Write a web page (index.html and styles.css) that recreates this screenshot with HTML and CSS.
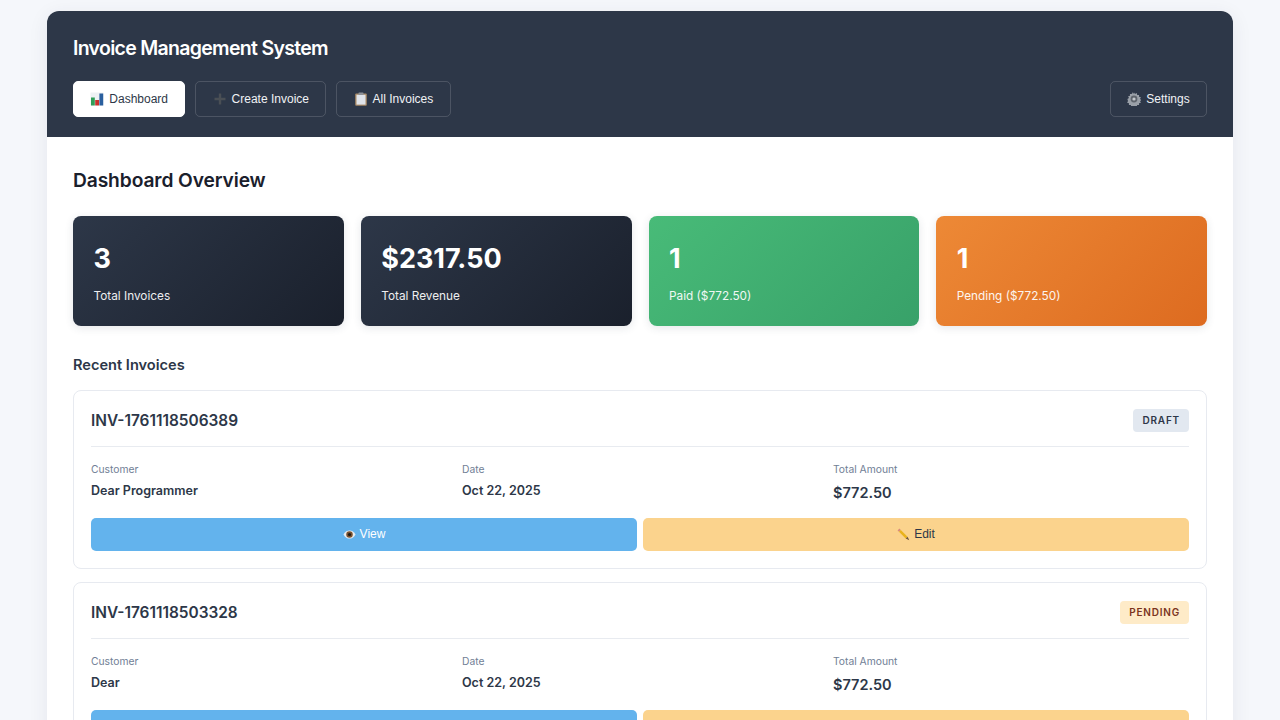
FILE: index.html
```html
<!DOCTYPE html>
<html lang="en">
<head>
<meta charset="utf-8">
<title>Invoice Management System</title>
<link rel="stylesheet" href="styles.css">
</head>
<body>
<div class="app">
  <header class="header">
    <h1 class="title">Invoice Management System</h1>
    <nav class="nav">
      <div class="nav-left">
        <button class="nav-btn active"><svg class="ico" viewBox="0 0 14 14"><rect x="0.5" y="0.5" width="13" height="13" fill="#eef1f4"/><rect x="1" y="5.500" width="3.800" height="8" fill="#2f9e58"/><rect x="5.200" y="8" width="3.800" height="5.500" fill="#c9302c"/><rect x="9.400" y="1.500" width="3.800" height="12" fill="#2a5f9e"/></svg>Dashboard</button>
        <button class="nav-btn"><svg class="ico" viewBox="0 0 14 14"><path d="M5.800 1.500h2.400v4.300h4.300v2.400H8.200v4.300H5.800V8.200H1.500V5.800h4.300z" fill="#4a4f55"/></svg>Create Invoice</button>
        <button class="nav-btn"><svg class="ico" viewBox="0 0 14 14"><rect x="1.200" y="1.500" width="11.600" height="12.300" rx="1" fill="#a98a66"/><rect x="2.500" y="2.800" width="9" height="9.800" fill="#dfe3ea"/><rect x="4.500" y="0.400" width="5" height="2.600" rx="0.600" fill="#8d9096"/></svg>All Invoices</button>
      </div>
      <button class="nav-btn"><svg class="ico" viewBox="0 0 14 14"><path d="M7 .4l1 1.600 1.700-.9.500 1.900 1.900-.1-.1 1.900 1.900.500-.9 1.700 1.600 1-1.600 1 .9 1.700-1.900.500.1 1.900-1.900-.1-.500 1.900-1.700-.9-1 1.600-1-1.600-1.700.9-.500-1.900-1.900.1.1-1.900-1.900-.500.9-1.700L.4 7l1.600-1-.9-1.700 1.900-.500-.1-1.900 1.900.1.500-1.900L6 2z" fill="#9aa0a8"/><circle cx="7" cy="7" r="3.400" fill="#5f656d"/><circle cx="7" cy="7" r="1.600" fill="#c3c7cc"/></svg>Settings</button>
    </nav>
  </header>
  <main class="content">
    <h2 class="page-title">Dashboard Overview</h2>
    <section class="stats">
      <div class="stat stat-dark"><div class="stat-value">3</div><div class="stat-label">Total Invoices</div></div>
      <div class="stat stat-dark"><div class="stat-value">$2317.50</div><div class="stat-label">Total Revenue</div></div>
      <div class="stat stat-green"><div class="stat-value">1</div><div class="stat-label">Paid ($772.50)</div></div>
      <div class="stat stat-orange"><div class="stat-value">1</div><div class="stat-label">Pending ($772.50)</div></div>
    </section>
    <h3 class="section-title">Recent Invoices</h3>
    <article class="invoice">
      <div class="invoice-head"><div class="invoice-id">INV-1761118506389</div><span class="badge badge-draft">DRAFT</span></div>
      <div class="details">
        <div><div class="label">Customer</div><div class="value">Dear Programmer</div></div>
        <div><div class="label">Date</div><div class="value">Oct 22, 2025</div></div>
        <div><div class="label">Total Amount</div><div class="amount">$772.50</div></div>
      </div>
      <div class="actions">
        <button class="act act-view"><svg class="ico-sm" viewBox="0 0 14 14"><path d="M.5 7C2.500 3.600 4.600 2.600 7 2.600S11.500 3.600 13.500 7C11.500 10.400 9.400 11.400 7 11.400S2.500 10.400.5 7z" fill="#e8ecef"/><circle cx="7" cy="7" r="3.500" fill="#7a5230"/><circle cx="7" cy="7" r="1.700" fill="#1c1a18"/></svg>View</button>
        <button class="act act-edit"><svg class="ico-sm" viewBox="0 0 14 14"><path d="M2.600.6L.6 2.600l1.500 1.500 2-2z" fill="#d98c7c"/><path d="M4.100 2.100l-2 2 7.300 7.300 2-2z" fill="#e9b21c"/><path d="M9.400 11.400l3.800 1.800-1.800-3.800z" fill="#6b5640"/></svg>Edit</button>
      </div>
    </article>
    <article class="invoice">
      <div class="invoice-head"><div class="invoice-id">INV-1761118503328</div><span class="badge badge-pending">PENDING</span></div>
      <div class="details">
        <div><div class="label">Customer</div><div class="value">Dear</div></div>
        <div><div class="label">Date</div><div class="value">Oct 22, 2025</div></div>
        <div><div class="label">Total Amount</div><div class="amount">$772.50</div></div>
      </div>
      <div class="actions">
        <button class="act act-view"><svg class="ico-sm" viewBox="0 0 14 14"><path d="M.5 7C2.500 3.600 4.600 2.600 7 2.600S11.500 3.600 13.500 7C11.500 10.400 9.400 11.400 7 11.400S2.500 10.400.5 7z" fill="#e8ecef"/><circle cx="7" cy="7" r="3.500" fill="#7a5230"/><circle cx="7" cy="7" r="1.700" fill="#1c1a18"/></svg>View</button>
        <button class="act act-edit"><svg class="ico-sm" viewBox="0 0 14 14"><path d="M2.600.6L.6 2.600l1.500 1.500 2-2z" fill="#d98c7c"/><path d="M4.100 2.100l-2 2 7.300 7.300 2-2z" fill="#e9b21c"/><path d="M9.400 11.400l3.800 1.800-1.800-3.800z" fill="#6b5640"/></svg>Edit</button>
      </div>
    </article>
  </main>
</div>
</body>
</html>
```

FILE: styles.css
```css
* { box-sizing: border-box; }
html, body { margin: 0; height: 100%; overflow: hidden; }
body {
  background: #f5f7fb;
  font-family: Inter, "Liberation Sans", sans-serif;
  color: #1a202c;
  padding: 11px 47px 0;
}
.app {
  background: #fff;
  border-radius: 12px 12px 0 0;
  box-shadow: 0 4px 20px rgba(45, 55, 72, 0.08);
  min-height: 1000px;
}
.header {
  background: #2d3748;
  border-radius: 12px 12px 0 0;
  padding: 25px 26px 20px;
  height: 126px;
}
.title {
  margin: 0 0 21px;
  font-size: 19.500px;
  line-height: 24px;
  font-weight: 600;
  color: #fff;
  letter-spacing: -0.7px;
}
.nav { display: flex; justify-content: space-between; }
.nav-left { display: flex; gap: 10px; }
.nav-btn {
  display: flex;
  align-items: center;
  justify-content: center;
  gap: 5px;
  height: 36px;
  padding: 0 16.300px;
  border: 1px solid rgba(255, 255, 255, 0.15);
  border-radius: 5px;
  background: transparent;
  color: #f0f2f5;
  font-family: "Liberation Sans", sans-serif;
  font-size: 12px;
}
.nav-btn.active {
  background: #fff;
  border-color: #fff;
  color: #2d3748;
}
.ico { width: 14px; height: 14px; flex: none; }
.content { padding: 30px 26px 0; }
.page-title {
  margin: 0 0 22px;
  font-size: 19.200px;
  line-height: 27px;
  font-weight: 600;
  color: #1a202c;
  letter-spacing: -0.1px;
}
.stats {
  display: grid;
  grid-template-columns: repeat(4, 1fr);
  gap: 17px;
  margin-bottom: 29px;
}
.stat {
  height: 110px;
  border-radius: 8px;
  padding: 26px 20.500px 0;
  color: #fff;
  box-shadow: 0 2px 8px rgba(45, 55, 72, 0.12);
}
.stat-dark { background: linear-gradient(135deg, #2d3748, #1a202c); }
.stat-green { background: linear-gradient(135deg, #48bb78, #38a169); }
.stat-orange { background: linear-gradient(135deg, #ed8936, #dd6b20); }
.stat-value {
  font-size: 27px;
  line-height: 34px;
  font-weight: 700;
  margin-bottom: 12px;
}
.stat-label {
  font-size: 11.800px;
  line-height: 16px;
  font-weight: 400;
  opacity: 0.92;
}
.section-title {
  margin: 0 0 15px;
  font-size: 14.600px;
  line-height: 20px;
  font-weight: 600;
  color: #2d3748;
}
.invoice {
  border: 1px solid #e7eaf0;
  border-radius: 8px;
  padding: 18px 17px 17px;
  height: 179px;
  margin-bottom: 13px;
  background: #fff;
}
.invoice-head {
  display: flex;
  justify-content: space-between;
  align-items: center;
  padding-bottom: 15px;
  border-bottom: 1px solid #e8ebf0;
  box-sizing: content-box;
  height: 22px;
  margin-bottom: 15px;
}
.invoice-id {
  font-size: 15.400px;
  font-weight: 600;
  color: #2d3748;
}
.badge {
  padding: 0 9px;
  height: 23px;
  line-height: 23px;
  border-radius: 4px;
  font-size: 10px;
  font-weight: 600;
  letter-spacing: 0.8px;
}
.badge-draft { background: #e2e8f0; color: #2d3748; }
.badge-pending { background: #feebc8; color: #7b341e; }
.details {
  display: grid;
  grid-template-columns: repeat(3, 1fr);
  gap: 15px;
  height: 56px;
}
.label {
  font-size: 10.300px;
  line-height: 14px;
  color: #718096;
  margin-bottom: 6px;
}
.value {
  font-size: 12.500px;
  line-height: 18px;
  font-weight: 600;
  color: #2d3748;
}
.amount {
  margin-top: 7px;
  font-size: 14.500px;
  line-height: 20px;
  font-weight: 600;
  color: #2d3748;
}
.actions { display: flex; gap: 6px; }
.act {
  flex: 1;
  display: flex;
  align-items: center;
  justify-content: center;
  gap: 4px;
  height: 33px;
  padding: 0 0 1px;
  border: 0;
  border-radius: 5px;
  font-family: "Liberation Sans", sans-serif;
  font-size: 12px;
}
.act-view { background: #63b3ed; color: #fff; }
.act-edit { background: #fbd38d; color: #2d3748; }
.ico-sm { width: 13px; height: 13px; flex: none; }
```
